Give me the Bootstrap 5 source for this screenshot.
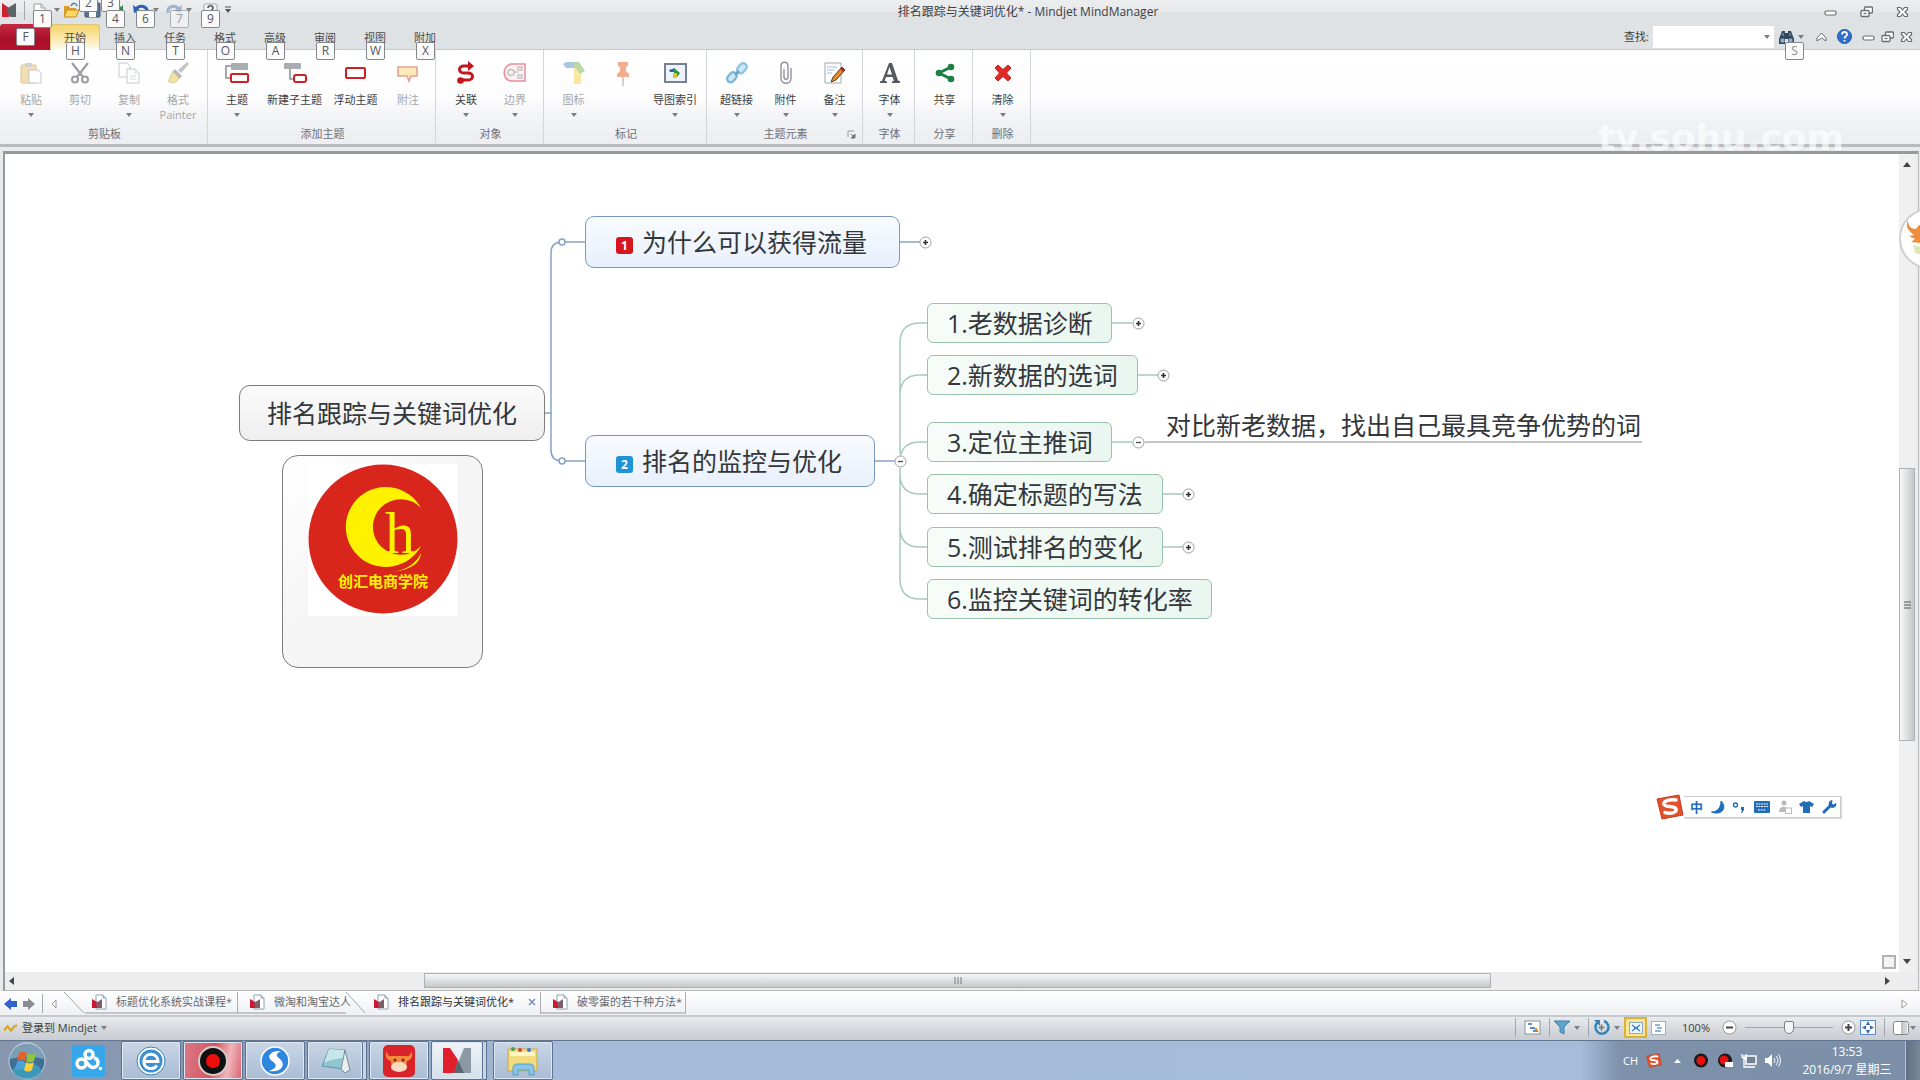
<!DOCTYPE html>
<html lang="zh-CN">
<head>
<meta charset="utf-8">
<meta name="viewport" content="width=device-width, initial-scale=1">
<title>排名跟踪与关键词优化* - Mindjet MindManager</title>
<link href="https://cdn.jsdelivr.net/npm/bootstrap@5.3.0/dist/css/bootstrap.min.css" rel="stylesheet">
<style>
:root{--ink:#3c3e42;--dim:#a4a6a9;--line:#c9ccd1}
body{font-family:"Open Sans","Noto Sans CJK SC",sans-serif;font-size:11px;line-height:16px;color:var(--ink);background:#fff;overflow:hidden}
button{font:inherit;color:inherit;background:none;border:0;padding:0}
svg{display:block;flex:none}
.caret{width:0;height:0;border:3px solid transparent;border-top:4px solid #7b7e83;border-bottom:0;flex:none}
/* title bar and tabs */
.app-head{background:linear-gradient(#eceeef 0,#e6e8ea 11px,#dfe2e4 14px,#dfe2e4 100%)}
.title-row{height:24px}
.title-text{font-size:12px;line-height:24px;left:0;right:0;top:0;padding-left:136px;pointer-events:none}
.qa{height:24px;padding-left:2px}
.qa button{position:relative;height:20px;display:flex;align-items:center;justify-content:flex-start}
.q-logo{width:22px}.q-new{width:39px}.q-open{width:21px}.q-save{width:24px}.q-sync{width:25px}.q-undo{width:33px}.q-redo{width:37px}.q-ask{width:22px}
.keytip{position:absolute;width:19px;height:18px;line-height:16px;border:1px solid #84878b;border-radius:2px;background:#fbfbfc;color:#55585c;font-size:12px;text-align:center;z-index:3}
.qa .keytip{top:10px}
.qa .keytip.high{top:-6px}
.k-r{left:9px}.k-open{left:16px}.k-save{left:17px}.k-sync{left:-2px}.k-undo{left:3px}.k-redo{left:4px;opacity:.55}.k-ask{left:-2px}
.tab-row{height:26px;border-bottom:1px solid #c5c8cb}
.rtab{position:relative;width:50px;height:26px;line-height:27px;text-align:center;font-size:11px;color:#4a4c50;text-decoration:none;display:block}
.rtab .keytip{left:16px;top:18px}
.rtab.file{background:linear-gradient(#c62a44,#a80f28 60%,#b6122c);border-radius:3px 3px 0 0}
.rtab.file .keytip{top:4px}
.rtab.open-tab{background:linear-gradient(#f5d46a,#fbeab4 60%,#fffdf5);border:1px solid #dcc47c;border-bottom:0;border-radius:3px 3px 0 0;line-height:25px}
.rtab.open-tab .keytip{top:17px;left:15px}
.find-box{width:121px;height:22px;border:0;background:#fff;font-size:11px;padding:0 16px 0 4px}
.find-wrap{position:relative}
.find-wrap .caret{position:absolute;right:4px;top:9px}
.find-go{position:relative;width:42px;padding-left:5px}
.find-go .keytip{left:11px;top:12px;color:#8a8d91}
.win-ctl{gap:23px;padding-right:11px}
.doc-ctl{padding-right:7px;gap:6px}
/* ribbon */
.ribbon{height:94px;background:linear-gradient(#fff 0,#fdfdfd 50%,#f0f1f5 78%,#eceef2)}
.rgroup{position:relative;border-right:1px solid #d2d5d9;height:94px}
.rgroup>.cmds{height:74px;padding-left:2px}
.gname{line-height:16px;text-align:center;color:#6c6f74;padding:2px 0 0 2px}
.cmd{width:49px;padding-top:12px;display:flex;flex-direction:column;align-items:center}
.cmd .lbl{line-height:14px;margin-top:9px;white-space:nowrap;min-height:14px}
.cmd .caret{margin-top:6px}
.cmd .tall{margin:-1px 0}
.cmd.off{color:var(--dim)}
.cmd.off svg{opacity:.5}
.c66{width:66px}.c56{width:56px}
.g1{width:208px}.g2{width:228px}.g3{width:108px}.g4{width:163px}.g5{width:156px}.g6{width:52px}.g7,.g8{width:58px}
.corner{position:absolute;right:6px;bottom:5px}
/* canvas */
.frame{border-top:3px solid #b9bbbe;background:#e9eaeb;padding:4px 1px 0 3px;min-height:0}
.frame-in{border-top:3px solid #97999c;border-left:2px solid #97999c;border-right:1px solid #b9bbbe;border-bottom:1px solid #b4b6b9;background:#ececed;min-height:0;padding-right:3px}
.work{min-height:0}
.board{position:relative;background:#fff;overflow:hidden;min-height:0}
.links{position:absolute;left:0;top:0;overflow:visible}
.topic{position:absolute;font-size:25px;line-height:36px;white-space:nowrap;color:#33363a;display:flex;align-items:center}
.root-t{left:234px;top:231px;width:306px;height:56px;border:1px solid #7d7d7d;border-radius:11px;background:linear-gradient(#fafafa,#efefef);justify-content:center}
.pic-t{left:277px;top:301px;width:201px;height:213px;border:1px solid #7d7d7d;border-radius:16px;background:linear-gradient(135deg,#fff,#f5f5f5 45%,#f5f5f5);align-items:flex-start;justify-content:center;padding-top:8px}
.main-t{border:1px solid #7b97bc;border-radius:9px;height:52px;background:linear-gradient(#f8fbff,#e8f0fc);left:580px;padding-left:30px}
.m1{top:62px;width:315px}.m2{top:281px;width:290px}
.prio{width:17px;height:17px;border-radius:3px;color:#fff;font-size:12px;font-weight:700;line-height:17px;text-align:center;margin:6px 9px 0 0}
.prio.red{background:#d5161c}.prio.blue{background:#1e93d6}
.sub-t{border:1px solid #98c2ac;border-radius:6px;height:40px;background:linear-gradient(90deg,#f7fcf9,#e9f6ef);left:922px;padding-left:19px}
.s1{top:149px;width:185px}.s2{top:201px;width:211px}.s3{top:268px;width:185px}.s4{top:320px;width:236px}.s5{top:373px;width:236px}.s6{top:425px;width:285px}
.leaf-t{left:1161px;top:253px}
.knob{position:absolute;width:13px;height:13px}
.kn0{left:914px;top:82px}.kn1{left:889px;top:301px}.kn2{left:1127px;top:163px}.kn3{left:1152px;top:215px}.kn4{left:1127px;top:282px}.kn5{left:1177px;top:334px}.kn6{left:1177px;top:387px}
.vbar{width:16px;background:#f0f0f1}
.vthumb{top:314px;height:273px;left:0;right:0;border:1px solid #aeb0b3;background:linear-gradient(90deg,#f8f8f8,#d9dadb 60%,#c3c4c6)}
.hbar{height:18px;background:#ededee}
.hthumb{left:419px;width:1067px;top:1px;height:15px;border:1px solid #aeb0b3;background:linear-gradient(#f6f6f6,#dadbdc 60%,#c6c7c9)}
.navbox{right:3px;bottom:3px;width:14px;height:14px;border:2px solid #b0b2b4;background:#f4f4f4}
.ime{right:58px;bottom:153px;height:24px}
.ime-strip{height:22px;width:157px;background:#fff;border:1px solid #c9cccf;border-left:0;box-shadow:1px 1px 1px #ddd;padding:0 3px 0 6px;font-size:13px;color:#1f6db8;font-weight:700}
.side-pet{right:-40px;top:208px;width:61px;height:61px;border-radius:50%;border:2px solid #cfd0d2;background:#fff;z-index:4}
.stamp{right:76px;top:118px;font:700 36px/40px "DejaVu Sans",sans-serif;color:#fff;opacity:.65;z-index:4;pointer-events:none}
/* document tabs */
.docs{height:26px;background:linear-gradient(#fff,#eff0f3);border-bottom:2px solid #c5c8cc;padding:1px 0 0 4px}
.nav-sep{margin:0 4px 0 2px;height:12px}
.dtab{height:22px;line-height:20px;color:#66696e;text-decoration:none;display:flex;align-items:center;white-space:nowrap;border-bottom:2px solid #c3c5c9}
.dtab svg{margin-right:9px}
.dtab.on{color:#2f3135;border-color:transparent}
.dtab .shut{margin:0 0 0 14px}
.d1{width:153px;padding-left:7px;border-right:1px solid #a9acb0}.d2{width:108px;padding-left:12px}.d3{width:174px;padding-left:8px}.d4{width:146px;padding-left:12px;border-left:1px solid #a9acb0;border-right:1px solid #a9acb0}
/* status bar */
.status{height:23px;background:linear-gradient(#e9ebee,#d3d7db 60%,#c9cdd2);padding-bottom:2px}
.sep{width:1px;height:19px;background:#a4a8ad;flex:none}
.picked{width:23px;height:21px;border:2px solid #d9b23d;background:#fbe694;display:flex;align-items:center;justify-content:center}
.zoomer{width:88px;height:16px;appearance:none;background:linear-gradient(#9fa3a8,#9fa3a8) center/100% 1px no-repeat;margin:0}
.zoomer::-webkit-slider-thumb{appearance:none;width:10px;height:13px;border:1px solid #7f8388;background:#f3f4f5;border-radius:2px 2px 5px 5px}
/* taskbar */
.taskbar{height:40px;background:linear-gradient(90deg,#8797ae 0,#8798b0 180px,#a5bbd9 560px,#a6bcdb calc(100% - 340px),#7d91aa calc(100% - 300px),#7b8fa8 100%);border-top:1px solid #62768f}
.orb{margin:0 26px 0 8px}
.tasks{gap:2px}
.tbtn{width:60px;height:39px;border:1px solid #5d7290;border-radius:2px;box-shadow:inset 0 0 0 1px #dfe8f3;background:linear-gradient(#c9d6e6,#a9bcd4);display:flex;align-items:center;justify-content:center}
.tbtn.rec{background:linear-gradient(100deg,#d97a85,#d65564 50%,#f0b5ba 75%,#d9606e)}
.tbtn.cur{background:linear-gradient(#f0f4f8,#d3dfeb);width:52px}
.tbtn.stack{width:56px}
.edge{width:4px;height:39px;border:1px solid #5d7290;border-left:0;background:#c8d5e4}
.tray-gap{margin-right:12px}
.clock{color:#fff;font-size:12px;line-height:18px;text-align:center;width:100px}
.desk{width:15px;height:39px;background:linear-gradient(90deg,#5f7183,#76899b);border-left:1px solid #b5c3d1}
.lang{color:#fff;font-size:11px}
</style>
<script src="https://cdn.jsdelivr.net/npm/bootstrap@5.3.0/dist/js/bootstrap.bundle.min.js"></script>
</head>
<body class="d-flex flex-column vh-100 position-relative">

<svg width="0" height="0" class="position-absolute">
  <symbol id="mdoc" viewBox="0 0 15 16"><path d="M4 1h7l3 3v11H4z" fill="#fff" stroke="#8aa2b5"/><path d="M11 1v3h3" fill="#dbe7ef" stroke="#8aa2b5"/><path d="M0 5l5 3v6H0z" fill="#cf1730"/><path d="M10 5v9H5l-1-5z" fill="#7d5f6b"/></symbol>
  <symbol id="plus" viewBox="0 0 13 13"><circle cx="6.500" cy="6.500" r="5.500" fill="#fff" stroke="#9a9da1"/><path d="M4 6.500h5M6.500 4v5" stroke="#333" stroke-width="1.600"/></symbol>
  <symbol id="minus" viewBox="0 0 13 13"><circle cx="6.500" cy="6.500" r="5.500" fill="#fff" stroke="#9a9da1"/><path d="M4 6.500h5" stroke="#555" stroke-width="1.400"/></symbol>
  <symbol id="wmin" viewBox="0 0 13 12"><rect x="1" y="5" width="11" height="4" rx="1.500" fill="#fff" stroke="#6a6d71" stroke-width="1.200"/></symbol>
  <symbol id="wres" viewBox="0 0 13 12"><rect x="4.500" y="1" width="8" height="6" rx="1" fill="#fff" stroke="#6a6d71" stroke-width="1.300"/><rect x="1" y="4.500" width="8" height="6" rx="1" fill="#fff" stroke="#6a6d71" stroke-width="1.300"/><path d="M3.500 7.500h3" stroke="#6a6d71" stroke-width="1.300"/></symbol>
  <symbol id="wcls" viewBox="0 0 13 12"><path d="M1.500 1.500h3l2 2.500 2-2.500h3v2L9 6l2.500 2.500v2h-3l-2-2.500-2 2.500h-3v-2L4 6 1.500 3.500z" fill="#fff" stroke="#6a6d71" stroke-width="1.200"/></symbol>
  <symbol id="slogo" viewBox="0 0 28 26"><path d="M1 5L23 1l4 20-21 4z" fill="#e2512c" stroke="#c23f1e" stroke-linejoin="round"/><path d="M20 6C13 5 7 7 8 10.500c1 3 11 1 12 4.500 1 4-6 5-11 3.500" fill="none" stroke="#fff" stroke-width="3.400" stroke-linecap="round"/></symbol>
</svg>

<header class="app-head">
  <div class="title-row d-flex justify-content-between position-relative">
    <div class="qa d-flex">
      <button class="q-logo" aria-label="Mindjet"><svg width="15" height="14" viewBox="0 0 15 14"><path d="M0 0l7 5v9H0z" fill="#d2202f"/><path d="M14 0v14H8L4 6z" fill="#5d646c"/></svg></button>
      <button class="q-new" aria-label="新建"><span class="sep me-2"></span><svg width="13" height="15" viewBox="0 0 13 15"><path d="M1 1h7l4 4v9H1z" fill="#fff" stroke="#9aa0a6"/><path d="M8 1v4h4" fill="none" stroke="#9aa0a6"/></svg><span class="caret ms-2"></span><span class="keytip k-r">1</span></button>
      <button class="q-open" aria-label="打开"><svg width="17" height="16" viewBox="0 0 17 16"><path d="M1 4h5l1 2h6v9H1z" fill="#d99c2b"/><path d="M4 8h12l-3 7H1z" fill="#fbd766" stroke="#c98d1f"/><path d="M8 4c2-4 5-3 6 0" fill="none" stroke="#3c7cc4" stroke-width="1.500"/></svg><span class="keytip high k-open">2</span></button>
      <button class="q-save" aria-label="保存"><svg width="17" height="16" viewBox="0 0 17 16"><rect x="1" y="1" width="15" height="14" rx="1" fill="#5a7391" stroke="#3e546f"/><rect x="4" y="1" width="9" height="6" fill="#dce6f0"/><rect x="5" y="10" width="7" height="5" fill="#fff"/></svg><span class="keytip high k-save">3</span></button>
      <button class="q-sync" aria-label="同步"><svg width="17" height="16" viewBox="0 0 17 16"><path d="M2 8a6 6 0 0 1 11-3l2-2v6H9l2-2a4 4 0 0 0-6 1z" fill="#2f8d46"/></svg><span class="keytip k-sync">4</span></button>
      <button class="q-undo" aria-label="撤消"><svg width="16" height="14" viewBox="0 0 16 14"><path d="M3 6c4-5 12-3 11 4" fill="none" stroke="#2d62b3" stroke-width="3"/><path d="M0 2l1 8 7-2z" fill="#2d62b3"/></svg><span class="caret ms-1"></span><span class="keytip k-undo">6</span></button>
      <button class="q-redo" aria-label="恢复" disabled><svg width="16" height="14" viewBox="0 0 16 14"><path d="M13 6C9 1 1 3 2 10" fill="none" stroke="#9fb3d2" stroke-width="3"/><path d="M16 2l-1 8-7-2z" fill="#9fb3d2"/></svg><span class="caret ms-1"></span><span class="keytip k-redo">7</span></button>
      <button class="q-ask" aria-label="帮助"><svg width="15" height="15" viewBox="0 0 15 15"><rect x="1" y="1" width="13" height="13" rx="1" fill="#f3f4f5" stroke="#a5a8ac"/><path d="M5 5c0-3 5-3 5 0 0 2-2.500 2-2.500 4" fill="none" stroke="#54585d" stroke-width="1.600"/></svg><span class="keytip k-ask">9</span></button>
      <button aria-label="自定义"><svg width="6" height="8" viewBox="0 0 6 8"><path d="M0 1h6" stroke="#555"/><path d="M0 3h6L3 7z" fill="#555"/></svg></button>
    </div>
    <div class="title-text position-absolute text-center">排名跟踪与关键词优化* - Mindjet MindManager</div>
    <div class="win-ctl d-flex align-items-center">
      <button aria-label="最小化"><svg width="13" height="12"><use href="#wmin"/></svg></button>
      <button aria-label="还原"><svg width="13" height="12"><use href="#wres"/></svg></button>
      <button aria-label="关闭"><svg width="13" height="12"><use href="#wcls"/></svg></button>
    </div>
  </div>
  <div class="tab-row d-flex justify-content-between">
    <nav class="d-flex">
      <a class="rtab file" href="#" aria-label="文件"><span class="keytip">F</span></a>
      <a class="rtab open-tab" href="#">开始<span class="keytip">H</span></a>
      <a class="rtab" href="#">插入<span class="keytip">N</span></a>
      <a class="rtab" href="#">任务<span class="keytip">T</span></a>
      <a class="rtab" href="#">格式<span class="keytip">O</span></a>
      <a class="rtab" href="#">高级<span class="keytip">A</span></a>
      <a class="rtab" href="#">审阅<span class="keytip">R</span></a>
      <a class="rtab" href="#">视图<span class="keytip">W</span></a>
      <a class="rtab" href="#">附加<span class="keytip">X</span></a>
    </nav>
    <div class="d-flex align-items-center">
      <label for="find" class="me-1">查找:</label>
      <div class="find-wrap"><input id="find" class="find-box" type="text"><span class="caret"></span></div>
      <button class="find-go d-flex align-items-center" aria-label="查找"><svg width="15" height="14" viewBox="0 0 15 14"><path d="M3 1h3v2h3V1h3l3 8v5H9V9H6v5H0V9z" fill="#33475c"/><path d="M2 9h3v3H2zM10 9h3v3h-3zM4 3v3M11 3v3" fill="#8fb0cc" stroke="#8fb0cc"/></svg><span class="caret ms-1"></span><span class="keytip">S</span></button>
      <div class="doc-ctl d-flex align-items-center">
        <button aria-label="折叠功能区"><svg width="11" height="10" viewBox="0 0 11 10"><path d="M1 6l4.500-5L10 6v3L5.500 6 1 9z" fill="#fff" stroke="#6a6d71"/></svg></button>
        <button class="mx-1" aria-label="帮助"><svg width="15" height="15" viewBox="0 0 15 15"><circle cx="7.500" cy="7.500" r="7" fill="#2f6fcd" stroke="#2457a3"/><path d="M5 5.500c0-3.500 5-3.500 5 0 0 2-2.500 1.500-2.500 4M7.500 11v1.500" fill="none" stroke="#fff" stroke-width="1.800"/></svg></button>
        <button aria-label="最小化文档"><svg width="13" height="12"><use href="#wmin"/></svg></button>
        <button aria-label="还原文档"><svg width="13" height="12"><use href="#wres"/></svg></button>
        <button aria-label="关闭文档"><svg width="13" height="12"><use href="#wcls"/></svg></button>
      </div>
    </div>
  </div>
</header>

<section class="ribbon d-flex">
  <div class="rgroup g1">
    <div class="cmds d-flex justify-content-center">
      <button class="cmd off"><svg width="22" height="22" viewBox="0 0 22 22"><rect x="1" y="3" width="15" height="18" rx="1" fill="#e9bd68" stroke="#b98a3a"/><rect x="5" y="1" width="7" height="4" fill="#a3a6aa"/><path d="M9 8h9l3 3v10H9z" fill="#fff" stroke="#8d959d"/></svg><span class="lbl">粘贴</span><span class="caret"></span></button>
      <button class="cmd off"><svg width="22" height="22" viewBox="0 0 22 22"><path d="M3 1l11 14M19 1L8 15" stroke="#3c4149" stroke-width="2.200"/><circle cx="6" cy="17.500" r="3" fill="none" stroke="#3c4149" stroke-width="2"/><circle cx="16" cy="17.500" r="3" fill="none" stroke="#3c4149" stroke-width="2"/></svg><span class="lbl">剪切</span></button>
      <button class="cmd off"><svg width="22" height="22" viewBox="0 0 22 22"><path d="M1 1h8l3 3v11H1z" fill="#fff" stroke="#8d959d"/><path d="M9 7h8l4 4v10H9z" fill="#fff" stroke="#8d959d"/><path d="M17 7v4h4M12 14h6M12 17h6" fill="none" stroke="#b0b6bc"/></svg><span class="lbl">复制</span><span class="caret"></span></button>
      <button class="cmd off"><svg width="22" height="22" viewBox="0 0 22 22"><path d="M20 0l2 2-8 9-3-3z" fill="#8a8d91"/><path d="M8 7l7 7-3 3-7-7z" fill="#777"/><path d="M6 10l6 6c-2 5-7 6-11 3 2-2 2-6 5-9z" fill="#e8ca4d" stroke="#b8992c"/></svg><span class="lbl">格式</span><span>Painter</span></button>
    </div>
    <div class="gname">剪贴板</div>
  </div>
  <div class="rgroup g2">
    <div class="cmds d-flex justify-content-center">
      <button class="cmd"><svg width="24" height="22" viewBox="0 0 24 22"><rect x="6" y="1" width="17" height="7" rx="1" fill="#a9acb0"/><path d="M6 4H1v12h5" fill="none" stroke="#8a8d91" stroke-width="1.500"/><rect x="6" y="12" width="17" height="8" rx="1" fill="#fff" stroke="#cf2027" stroke-width="2"/></svg><span class="lbl">主题</span><span class="caret"></span></button>
      <button class="cmd c66"><svg width="24" height="22" viewBox="0 0 24 22"><rect x="1" y="1" width="17" height="6" rx="1" fill="#a9acb0"/><path d="M7 7v10h4" fill="none" stroke="#8a8d91" stroke-width="1.500"/><rect x="11" y="13" width="12" height="7" rx="2" fill="#fff" stroke="#cf2027" stroke-width="2"/></svg><span class="lbl">新建子主题</span></button>
      <button class="cmd c56"><svg width="22" height="22" viewBox="0 0 22 22"><rect x="1" y="6" width="19" height="10" rx="1" fill="#fff" stroke="#cf2027" stroke-width="2"/></svg><span class="lbl">浮动主题</span></button>
      <button class="cmd off"><svg width="22" height="22" viewBox="0 0 22 22"><path d="M1 5h19v9h-6l-2 5-2-5H1z" fill="#fbd37a" stroke="#cf4c20" stroke-width="1.600"/></svg><span class="lbl">附注</span></button>
    </div>
    <div class="gname">添加主题</div>
  </div>
  <div class="rgroup g3">
    <div class="cmds d-flex justify-content-center">
      <button class="cmd"><svg class="tall" width="20" height="24" viewBox="0 0 20 24"><path d="M13 5H8C2 5 2 12 8 12h4c6 0 6 7 0 7H5" fill="none" stroke="#c4161c" stroke-width="3"/><path d="M12 0l6 5-6 5z" fill="#c4161c"/><circle cx="4.500" cy="19.500" r="3.300" fill="#c4161c"/></svg><span class="lbl">关联</span><span class="caret"></span></button>
      <button class="cmd off"><svg width="24" height="22" viewBox="0 0 24 22"><path d="M8 2h14v17H8c-9-2-9-14 0-17z" fill="#fbe5e8" stroke="#cf2040" stroke-width="1.500"/><circle cx="8" cy="10.500" r="3" fill="none" stroke="#888" stroke-width="1.500"/><path d="M11 10h4M15 5h4v3h-4zM15 13h4v3h-4z" fill="none" stroke="#888" stroke-width="1.300"/></svg><span class="lbl">边界</span><span class="caret"></span></button>
    </div>
    <div class="gname">对象</div>
  </div>
  <div class="rgroup g4">
    <div class="cmds d-flex justify-content-center">
      <button class="cmd off"><svg class="tall" width="22" height="24" viewBox="0 0 22 24"><path d="M0 3l3-2h8v6H3z" fill="#5b8dcf"/><path d="M11 7h7v16h-7z" fill="#f0d14a"/><path d="M11 1h5l6 9-5 3-4-6h-2z" fill="#79b54c"/></svg><span class="lbl">图标</span><span class="caret"></span></button>
      <button class="cmd off" aria-label="标签"><svg class="tall" width="14" height="25" viewBox="0 0 14 25"><path d="M7 16v9" stroke="#888" stroke-width="1.500"/><path d="M2 1h10v4l-2 1v4l3 3v3H1v-3l3-3V6L2 5z" fill="#e8601c"/></svg></button>
      <button class="cmd c56"><svg width="23" height="22" viewBox="0 0 23 22"><rect x="1" y="2" width="21" height="18" fill="#eef3fb" stroke="#777f92" stroke-width="2"/><path d="M5 8l6-2v4H6z" fill="#2d62b3"/><path d="M10 6l6 5-3 4-3-4z" fill="#2f9440"/><path d="M9 11h4v5H9z" fill="#dcc623"/></svg><span class="lbl">导图索引</span><span class="caret"></span></button>
    </div>
    <div class="gname">标记</div>
  </div>
  <div class="rgroup g5">
    <div class="cmds d-flex justify-content-center">
      <button class="cmd"><svg width="22" height="22" viewBox="0 0 22 22"><rect x="-5" y="-4" width="11" height="7" rx="3.500" transform="translate(6 16) rotate(-50)" fill="#cfe6f3" stroke="#7fb6d6" stroke-width="2.400"/><rect x="-5" y="-4" width="11" height="7" rx="3.500" transform="translate(16 7) rotate(-50)" fill="#cfe6f3" stroke="#8cc3e0" stroke-width="2.400"/><path d="M9 13l4-4" stroke="#6ba5c8" stroke-width="2.500"/></svg><span class="lbl">超链接</span><span class="caret"></span></button>
      <button class="cmd"><svg class="tall" width="14" height="24" viewBox="0 0 14 24"><path d="M5 8v8c0 3 4 3 4 0V5c0-5-7-5-7 0v12c0 7 10 7 10 0V7" fill="none" stroke="#8f9296" stroke-width="1.400"/></svg><span class="lbl">附件</span><span class="caret"></span></button>
      <button class="cmd"><svg width="22" height="22" viewBox="0 0 22 22"><path d="M1 1h16v20H1z" fill="#fff" stroke="#a1a6ac"/><path d="M3 5h10M3 8h7M3 11h5" stroke="#9cc0e0"/><path d="M18 5l3 3-9 10-5 2 2-5z" fill="#e08a2a" stroke="#5c4030"/><path d="M18 5l3 3-2 2-3-3z" fill="#a02f2f"/></svg><span class="lbl">备注</span><span class="caret"></span></button>
    </div>
    <div class="gname">主题元素</div>
    <svg class="corner" width="9" height="9" viewBox="0 0 9 9"><path d="M1 7V1h6" fill="none" stroke="#999"/><path d="M8 4v4H4zM4 4l3 3" fill="#777" stroke="#777"/></svg>
  </div>
  <div class="rgroup g6">
    <div class="cmds d-flex justify-content-center">
      <button class="cmd"><svg width="22" height="22" viewBox="0 0 22 22"><path d="M1 21v-1.500l2-.7L10 1h3l6 17.500 2 .8V21h-8v-1.500l2-.7L13.500 15H7l-1.300 3.800 2.300.7V21zM8 12.500h5L10.500 5z" fill="#55585c"/></svg><span class="lbl">字体</span><span class="caret"></span></button>
    </div>
    <div class="gname">字体</div>
  </div>
  <div class="rgroup g7">
    <div class="cmds d-flex justify-content-center">
      <button class="cmd"><svg width="20" height="22" viewBox="0 0 20 22"><path d="M16 5L4 11l12 6" fill="none" stroke="#1c8045" stroke-width="3"/><circle cx="16" cy="5" r="3.300" fill="#1c8045"/><circle cx="4" cy="11" r="3.300" fill="#1c8045"/><circle cx="16" cy="17" r="3.300" fill="#1c8045"/></svg><span class="lbl">共享</span></button>
    </div>
    <div class="gname">分享</div>
  </div>
  <div class="rgroup g8">
    <div class="cmds d-flex justify-content-center">
      <button class="cmd"><svg width="18" height="22" viewBox="0 0 18 22"><path d="M4 3l5 4.500L14 3l3 3-4.500 5 4.500 5-3 3-5-4.500L4 19l-3-3 4.500-5L1 6z" fill="#e02a26" stroke="#b8201d"/></svg><span class="lbl">清除</span><span class="caret"></span></button>
    </div>
    <div class="gname">删除</div>
  </div>
</section>

<main class="frame flex-grow-1 d-flex flex-column">
  <div class="frame-in flex-grow-1 d-flex flex-column">
    <div class="work d-flex flex-grow-1">
      <div class="board flex-grow-1">
        <svg class="links" width="1700" height="600" fill="none">
          <g stroke="#86a3c4" stroke-width="1.500">
            <path d="M539 259h8M580 88h-23q-11 0-11 11v197q0 11 11 11h23M895 88h20M870 307h20"/>
            <g fill="#fff"><circle cx="557" cy="88" r="3"/><circle cx="557" cy="307" r="3"/></g>
          </g>
          <g stroke="#a8cbb9" stroke-width="1.500">
            <path d="M895 300V189q0-20 20-20h7M895 241q0-20 20-20h7M895 308q0-20 20-20h7M895 320q0 20 20 20h7M895 373q0 20 20 20h7M895 314v111q0 20 20 20h7"/>
            <path d="M1107 169h20M1133 221h20M1107 288h20M1158 340h20M1158 393h20"/>
          </g>
          <path d="M1140 288h497" stroke="#aeb0b2" stroke-width="1.500"/>
        </svg>
        <div class="topic root-t">排名跟踪与关键词优化</div>
        <div class="topic pic-t">
          <svg width="150" height="152" viewBox="0 0 150 152">
            <rect width="150" height="152" fill="#fff"/><circle cx="75" cy="75" r="74.500" fill="#d9261c"/>
            <path d="M113 44A40 40 0 1 0 113 82A27.800 27.800 0 1 1 113 44z" fill="#fff200"/>
            <text x="77" y="89" font-family="Liberation Serif,serif" font-size="60" fill="#fff200">h</text>
            <path d="M86 108q20-4 27-19-1 15-27 19z" fill="#fff200"/>
            <text x="75" y="123" text-anchor="middle" font-family="Noto Sans CJK SC,sans-serif" font-weight="700" font-size="15" fill="#fff200">创汇电商学院</text>
          </svg>
        </div>
        <div class="topic main-t m1"><span class="prio red">1</span>为什么可以获得流量</div>
        <div class="topic main-t m2"><span class="prio blue">2</span>排名的监控与优化</div>
        <div class="topic sub-t s1">1.老数据诊断</div>
        <div class="topic sub-t s2">2.新数据的选词</div>
        <div class="topic sub-t s3">3.定位主推词</div>
        <div class="topic sub-t s4">4.确定标题的写法</div>
        <div class="topic sub-t s5">5.测试排名的变化</div>
        <div class="topic sub-t s6">6.监控关键词的转化率</div>
        <div class="topic leaf-t">对比新老数据，找出自己最具竞争优势的词</div>
        <button class="knob kn0" aria-label="展开"><svg width="13" height="13"><use href="#plus"/></svg></button>
        <button class="knob kn1" aria-label="折叠"><svg width="13" height="13"><use href="#minus"/></svg></button>
        <button class="knob kn2" aria-label="展开"><svg width="13" height="13"><use href="#plus"/></svg></button>
        <button class="knob kn3" aria-label="展开"><svg width="13" height="13"><use href="#plus"/></svg></button>
        <button class="knob kn4" aria-label="折叠"><svg width="13" height="13"><use href="#minus"/></svg></button>
        <button class="knob kn5" aria-label="展开"><svg width="13" height="13"><use href="#plus"/></svg></button>
        <button class="knob kn6" aria-label="展开"><svg width="13" height="13"><use href="#plus"/></svg></button>
        <div class="ime position-absolute d-flex align-items-center">
          <svg width="28" height="26"><use href="#slogo"/></svg>
          <div class="ime-strip d-flex align-items-center justify-content-between">
            <span>中</span>
            <svg width="14" height="14" viewBox="0 0 14 14"><path d="M10 1c7 7 0 15-9.500 11C6 12 10 8 10 1z" fill="#1f6db8" stroke="#1f6db8"/></svg>
            <svg width="14" height="14" viewBox="0 0 14 14"><circle cx="3.500" cy="5" r="2" fill="none" stroke="#1f6db8" stroke-width="1.400"/><path d="M9 7h3v3l-2 3H9l1-3H9z" fill="#1f6db8"/></svg>
            <svg width="16" height="12" viewBox="0 0 16 12"><rect width="16" height="12" rx="1" fill="#1f6db8"/><path d="M2 3h12M2 5.500h12M4 9h8" stroke="#fff" stroke-width="1.200" stroke-dasharray="1.800 .8"/></svg>
            <svg width="14" height="14" viewBox="0 0 14 14"><circle cx="6" cy="3" r="2.500" fill="#b8babd"/><path d="M1 12c0-7 9-7 9 0z" fill="#b8babd"/><rect x="7.500" y="8" width="6" height="5.500" fill="#fff" stroke="#b8babd"/></svg>
            <svg width="15" height="14" viewBox="0 0 15 14"><path d="M5 1q2.500 2 5 0l5 3-2 3-2-1v7H4V6L2 7 0 4z" fill="#1f6db8"/></svg>
            <svg width="15" height="14" viewBox="0 0 15 14"><path d="M2 12l7-7" stroke="#1f6db8" stroke-width="3" stroke-linecap="round"/><path d="M14 3.500a3.500 3.500 0 1 1-4-3L9.500 4l2 1z" fill="#1f6db8" stroke="#1f6db8"/></svg>
          </div>
        </div>
        <button class="navbox position-absolute" aria-label="导航"></button>
      </div>
      <div class="vbar position-relative d-flex flex-column justify-content-between align-items-center py-2">
        <svg width="8" height="5"><path d="M0 5l4-5 4 5z" fill="#444"/></svg>
        <div class="vthumb position-absolute d-flex align-items-center justify-content-center"><svg width="7" height="8"><path d="M0 1h7M0 4h7M0 7h7" stroke="#555"/></svg></div>
        <svg width="8" height="5"><path d="M0 0h8L4 5z" fill="#444"/></svg>
      </div>
    </div>
    <div class="hbar position-relative d-flex justify-content-between align-items-center ps-1">
      <svg width="6" height="8"><path d="M5 0v8L0 4z" fill="#444"/></svg>
      <div class="hthumb position-absolute d-flex align-items-center justify-content-center"><svg width="8" height="7"><path d="M1 0v7M4 0v7M7 0v7" stroke="#777"/></svg></div>
      <svg width="6" height="8" class="me-4"><path d="M0 0v8l5-4z" fill="#444"/></svg>
    </div>
  </div>
</main>

<nav class="docs d-flex">
  <div class="d-flex align-items-center gap-1">
    <button aria-label="后退"><svg width="14" height="12" viewBox="0 0 14 12"><path d="M7 0v3h6v6H7v3L0 6z" fill="#2f63c9"/></svg></button>
    <button aria-label="前进"><svg width="14" height="12" viewBox="0 0 14 12"><path d="M6 0v3H1v6h5v3l7-6z" fill="#8a8d91"/></svg></button>
    <span class="sep nav-sep"></span>
    <button aria-label="上一标签"><svg width="6" height="10"><path d="M5 1v8L1 5z" fill="#fff" stroke="#999"/></svg></button>
  </div>
  <svg width="24" height="22" class="ms-1" viewBox="0 0 24 22"><path d="M3 0l20 21" stroke="#9fa2a6"/></svg>
  <a class="dtab d1" href="#"><svg width="15" height="16"><use href="#mdoc"/></svg>标题优化系统实战课程*</a>
  <a class="dtab d2" href="#"><svg width="15" height="16"><use href="#mdoc"/></svg>微淘和淘宝达人</a>
  <svg width="20" height="22" viewBox="0 0 20 22"><path d="M0 0l19 21" stroke="#9fa2a6"/></svg>
  <a class="dtab on d3" href="#"><svg width="15" height="16"><use href="#mdoc"/></svg>排名跟踪与关键词优化*<svg width="8" height="8" class="shut"><path d="M1 1l6 6M7 1L1 7" stroke="#7b8fc0" stroke-width="1.500"/></svg></a>
  <a class="dtab d4" href="#"><svg width="15" height="16"><use href="#mdoc"/></svg>破零蛋的若干种方法*</a>
  <button class="ms-auto me-2 pe-1" aria-label="下一标签"><svg width="7" height="10"><path d="M1 1v8l5-4z" fill="#fff" stroke="#999"/></svg></button>
</nav>

<footer class="status d-flex justify-content-between align-items-center">
  <button class="d-flex align-items-center ms-1"><svg width="14" height="10" viewBox="0 0 16 10"><path d="M0 8l4-5 4 5 4-5 3-1" fill="none" stroke="#d9a520" stroke-width="2.400"/></svg><span class="ms-1">登录到 Mindjet</span><span class="caret ms-1"></span></button>
  <div class="d-flex align-items-center">
    <span class="sep me-2"></span>
    <button aria-label="任务"><svg width="17" height="15" viewBox="0 0 17 15"><rect x="1" y="1" width="15" height="13" fill="#fff" stroke="#8a939c"/><path d="M4 4h4M6 8h5M9 11h5" stroke="#5b8dcf" stroke-width="2"/><path d="M12 8v3" stroke="#e08a2a" stroke-width="2"/></svg></button>
    <span class="sep ms-2 me-1"></span>
    <button class="d-flex align-items-center gap-1" aria-label="筛选"><svg width="16" height="15" viewBox="0 0 16 15"><path d="M0 1h16l-6 6v7l-4-2V7z" fill="#5fa3cf" stroke="#3f80ad"/></svg><span class="caret"></span></button>
    <span class="sep ms-2 me-1"></span>
    <button class="d-flex align-items-center gap-1" aria-label="详细程度"><svg width="17" height="17" viewBox="0 0 17 17"><path d="M5 3a6.500 6.500 0 1 0 6-1" fill="none" stroke="#2f84ba" stroke-width="2.400"/><path d="M1 1h6v6z" fill="#2f84ba"/><path d="M8.500 5.500v6M5.500 8.500h6" stroke="#777" stroke-width="1.600"/></svg><span class="caret"></span></button>
    <button class="picked mx-1" aria-label="导图视图"><svg width="14" height="12" viewBox="0 0 14 12"><rect x=".5" y=".5" width="13" height="11" fill="#eef5fc" stroke="#8aa7c4"/><path d="M3 3l8 6M11 3L3 9M5 6h4" stroke="#3f7fd0" stroke-width="1.400"/></svg></button>
    <button aria-label="大纲视图"><svg width="15" height="14" viewBox="0 0 15 14"><rect x=".5" y=".5" width="14" height="13" fill="#fff" stroke="#9fb3c6"/><path d="M4 4h5M6 7h5M4 10h6" stroke="#6f9bd0" stroke-width="1.400"/></svg></button>
    <label for="zoom" class="ms-3 me-2">100%</label>
    <button class="ms-1 me-2" aria-label="缩小"><svg width="15" height="15" viewBox="0 0 15 15"><circle cx="7.500" cy="7.500" r="6.500" fill="#fff" stroke="#9a9ea3"/><path d="M4 7.500h7" stroke="#444" stroke-width="2"/></svg></button>
    <input id="zoom" class="zoomer" type="range" min="0" max="100" value="50">
    <button class="ms-2 me-1" aria-label="放大"><svg width="15" height="15" viewBox="0 0 15 15"><circle cx="7.500" cy="7.500" r="6.500" fill="#fff" stroke="#9a9ea3"/><path d="M4 7.500h7M7.500 4v7" stroke="#444" stroke-width="2"/></svg></button>
    <button aria-label="适合页面"><svg width="16" height="15" viewBox="0 0 16 15"><rect x=".5" y=".5" width="15" height="14" fill="#f2f7fd" stroke="#5b8dcf"/><path d="M8 1l2 4H6zM8 14l2-4H6zM2 7.500l4-2v4zM14 7.500l-4-2v4z" fill="#3c5fa0"/></svg></button>
    <span class="sep mx-2"></span>
    <button class="d-flex align-items-center me-1" aria-label="任务窗格"><svg width="17" height="14" viewBox="0 0 17 14"><rect x=".5" y=".5" width="15" height="13" rx="2" fill="#fff" stroke="#7f8388"/><path d="M9 1v12" stroke="#7f8388"/><path d="M10 1h4v12h-4z" fill="#cfd3d8"/></svg><span class="caret"></span></button>
  </div>
</footer>

<div class="taskbar d-flex justify-content-between">
  <div class="d-flex align-items-center">
    <button class="orb" aria-label="开始"><svg width="38" height="38" viewBox="0 0 38 38"><circle cx="19" cy="19" r="18" fill="#3f6f96" stroke="#c6d3df"/><ellipse cx="19" cy="29" rx="14" ry="8" fill="#3fa9c9" opacity=".7"/><path d="M2 17a17 17 0 0 1 34 0q-17-5-34 0z" fill="#cad6e0" opacity=".45"/><path d="M11 11q4-3 8 0l-2 8q-4-3-8 0z" fill="#e8622c"/><path d="M20 11q4 3 8 0l-2 8q-4 3-8 0z" fill="#93c43d"/><path d="M9 20q4-3 8 0l-2 8q-4-3-8 0z" fill="#4ba3dd"/><path d="M18 20q4 3 8 0l-2 8q-4 3-8 0z" fill="#f8cf3c"/></svg></button>
    <button class="me-3" aria-label="百度网盘"><svg width="33" height="32" viewBox="0 0 33 32"><rect width="33" height="32" rx="3" fill="#35a7ea"/><g fill="none" stroke="#fff" stroke-width="3.400"><circle cx="17" cy="9.500" r="4"/><circle cx="9.500" cy="18.500" r="4.500"/><path d="M13 15.500c3 3 4 7 8 7 3 0 5-2 5-5 0-2-1-4-4-4.500"/></g><circle cx="28.500" cy="23.500" r="1.800" fill="#fff"/></svg></button>
    <div class="tasks d-flex">
      <button class="tbtn" aria-label="浏览器"><svg width="30" height="30" viewBox="0 0 30 30"><circle cx="15" cy="15" r="14" fill="#fff" stroke="#3d7fb5"/><circle cx="15" cy="15" r="11.500" fill="#3b8fd0"/><path d="M7 15.500h15c0-9-13-10-14-1s9 10 13 5" fill="none" stroke="#fff" stroke-width="3"/></svg></button>
      <button class="tbtn rec" aria-label="录像"><svg width="30" height="30" viewBox="0 0 30 30"><circle cx="15" cy="15" r="14" fill="#111" stroke="#d5cfc9" stroke-width="2"/><circle cx="15" cy="15" r="7" fill="#f20d0d"/></svg></button>
      <button class="tbtn" aria-label="搜狗浏览器"><svg width="30" height="30" viewBox="0 0 30 30"><circle cx="15" cy="15" r="14" fill="#2f86de" stroke="#fff" stroke-width="1.500"/><path d="M21 5C10 4 6 11 12 15c5 3 6 7-3 10 11 2 17-5 12-11-4-4-7-5 0-9z" fill="#fff"/></svg></button>
      <div class="d-flex"><button class="tbtn stack" aria-label="记事本"><svg width="32" height="30" viewBox="0 0 32 30"><path d="M10 3l16 1-2 19-21-3z" fill="#8fc6cf" stroke="#5a97a5"/><path d="M10 3l16 1-2 8C14 13 8 15 5 17z" fill="#c7e6ea"/><path d="M26 4l5 20-5 3-4-4z" fill="#e8edf0" stroke="#7e8a93"/></svg></button><span class="edge"></span></div>
      <button class="tbtn" aria-label="千牛"><svg width="32" height="32" viewBox="0 0 32 32"><rect width="32" height="32" rx="5" fill="#d8232a"/><path d="M4 6c0 6 4 5 6 5h12c2 0 6 1 6-5 3 5 0 9-4 10l-1 9H9l-1-9C4 15 1 11 4 6z" fill="#f58a3c"/><ellipse cx="16" cy="22" rx="8" ry="5" fill="#fbdcc0"/><circle cx="12" cy="15" r="1.500" fill="#7a2a12"/><circle cx="20" cy="15" r="1.500" fill="#7a2a12"/></svg></button>
      <div class="d-flex"><button class="tbtn cur" aria-label="Mindjet"><svg width="28" height="26" viewBox="0 0 28 26"><path d="M0 0h7l8 12-3 13H0z" fill="#e21f2d"/><path d="M28 0h-7L11 25h17z" fill="#8b99a4"/><path d="M15 12l6 13H11z" fill="#5a6670"/></svg></button><span class="edge"></span></div>
      <button class="tbtn ms-1" aria-label="资源管理器"><svg width="34" height="30" viewBox="0 0 34 30"><path d="M2 3h29v22H2z" fill="#f2dc82" stroke="#c9a94a"/><path d="M4 6h25v4H4z" fill="#fff4c2"/><circle cx="7" cy="3" r="2" fill="#4aa04a"/><circle cx="14" cy="4" r="2" fill="#cf4b2a"/><circle cx="23" cy="4" r="2" fill="#3b78c4"/><path d="M7 29v-7q0-4 5-4h11q5 0 5 4v7h-5v-5H12v5z" fill="#86c7e8" stroke="#559dc4"/></svg></button>
    </div>
  </div>
  <div class="d-flex align-items-center">
    <span class="lang me-2">CH</span>
    <svg width="16" height="15" class="tray-gap"><use href="#slogo"/></svg>
    <svg width="7" height="4" class="tray-gap"><path d="M0 4l3.500-4L7 4z" fill="#fff"/></svg>
    <svg width="16" height="15" class="me-2" viewBox="0 0 16 15"><circle cx="8" cy="7.500" r="7" fill="#1a1a1a"/><circle cx="8" cy="7.500" r="4.500" fill="#e80f0f"/></svg>
    <svg width="16" height="15" class="me-2" viewBox="0 0 16 15"><circle cx="8" cy="7.500" r="7" fill="#1a1a1a"/><circle cx="7" cy="7" r="4.500" fill="#e80f0f"/><rect x="8" y="9" width="8" height="5" fill="#fff"/></svg>
    <svg width="16" height="15" class="me-2" viewBox="0 0 16 15"><rect x="5" y="3" width="10" height="8" fill="#6f8296" stroke="#fff" stroke-width="1.500"/><path d="M7 14h7M3 2v4h3M1 1v3q2 2 4 0V1M3 6v8h4" fill="none" stroke="#fff" stroke-width="1.300"/></svg>
    <svg width="16" height="15" class="me-3" viewBox="0 0 16 15"><path d="M0 5h3l4-4v13l-4-4H0z" fill="#fff"/><path d="M9 5q2 2.500 0 5M11 3q4 4.500 0 9M13.500 1.500q4 6 0 12" fill="none" stroke="#fff"/></svg>
    <div class="clock me-1">13:53<br>2016/9/7 星期三</div>
    <button class="desk ms-1" aria-label="显示桌面"></button>
  </div>
</div>

<div class="side-pet position-absolute"><svg width="40" height="57" viewBox="0 0 40 57"><path d="M7 10c0 6 3 9 8 9 3-5 7-6 12-6v24l-8-4-9-1 4-3-6-3 5-1c-6-4-9-9-6-15z" fill="#f08c3e"/><path d="M12 35l12 3v8l-10-3z" fill="#dfe6b4"/></svg></div>
<div class="stamp position-absolute">tv.sohu.com</div>
</body>
</html>
